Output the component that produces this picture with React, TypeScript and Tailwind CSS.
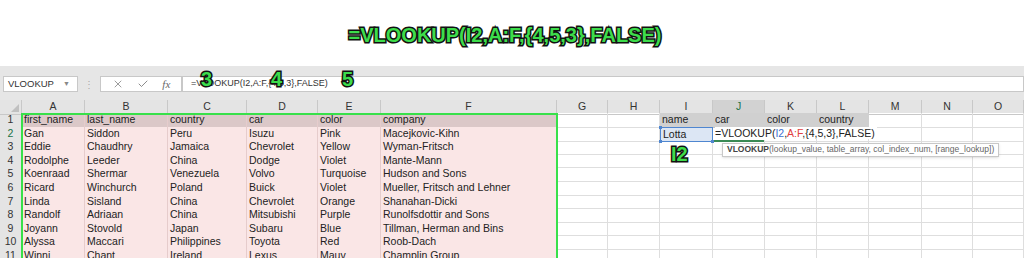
import { X, Check } from 'lucide-react';

const COLS = ['A', 'B', 'C', 'D', 'E', 'F', 'G', 'H', 'I', 'J', 'K', 'L', 'M', 'N', 'O'];

const data: string[][] = [
  ['first_name', 'last_name', 'country', 'car', 'color', 'company'],
  ['Gan', 'Siddon', 'Peru', 'Isuzu', 'Pink', 'Macejkovic-Kihn'],
  ['Eddie', 'Chaudhry', 'Jamaica', 'Chevrolet', 'Yellow', 'Wyman-Fritsch'],
  ['Rodolphe', 'Leeder', 'China', 'Dodge', 'Violet', 'Mante-Mann'],
  ['Koenraad', 'Shermar', 'Venezuela', 'Volvo', 'Turquoise', 'Hudson and Sons'],
  ['Ricard', 'Winchurch', 'Poland', 'Buick', 'Violet', 'Mueller, Fritsch and Lehner'],
  ['Linda', 'Sisland', 'China', 'Chevrolet', 'Orange', 'Shanahan-Dicki'],
  ['Randolf', 'Adriaan', 'China', 'Mitsubishi', 'Purple', 'Runolfsdottir and Sons'],
  ['Joyann', 'Stovold', 'Japan', 'Subaru', 'Blue', 'Tillman, Herman and Bins'],
  ['Alyssa', 'Maccari', 'Philippines', 'Toyota', 'Red', 'Roob-Dach'],
  ['Winni', 'Chant', 'Ireland', 'Lexus', 'Mauv', 'Champlin Group'],
];

const lookupHead = ['name', 'car', 'color', 'country'];

const gridCols =
  'grid grid-cols-[22px_63px_83px_79px_71px_63px_176px_51px_52px_53px_52px_52px_52px_53px_51px_51px]';

const outline = '[-webkit-text-stroke:3px_#111] [paint-order:stroke_fill] text-[#3ddc4b] font-bold';

function Cell({ row, col }: { row: number; col: number }) {
  // col 0..14 -> A..O
  if (col < 6) {
    const bg = row === 1 ? 'bg-[#dbc8c8]' : 'bg-[#fae6e6]';
    return (
      <div className={`${bg} border-r border-b border-[#e6cccc] pl-[2px] overflow-hidden whitespace-nowrap`}>
        {data[row - 1][col]}
      </div>
    );
  }
  if (row === 1 && col >= 8 && col <= 11) {
    return (
      <div className="bg-[#d0d0d0] border-b border-[#c4c4c4] pl-[2px] whitespace-nowrap">{lookupHead[col - 8]}</div>
    );
  }
  if (row === 2 && col === 8) {
    return (
      <div className="bg-[#dce6f4] border border-[#4f86d0] pl-[2px] relative">
        Lotta
        <span className="absolute -left-[2px] -top-[2px] w-[3px] h-[3px] bg-[#4f86d0]" />
        <span className="absolute -right-[2px] -bottom-[2px] w-[3px] h-[3px] bg-[#4f86d0]" />
        <span className="absolute -left-[2px] -bottom-[2px] w-[3px] h-[3px] bg-[#4f86d0]" />
      </div>
    );
  }
  if (row === 2 && col === 9) {
    return (
      <div className="border-b-2 border-[#3a8a55] pl-[2px] whitespace-nowrap overflow-visible">
        <span className="relative z-10 bg-white pr-[2px] text-[#222]">
          =VLOOKUP(<span className="text-[#3d6fd0]">I2</span>,<span className="text-[#e04040]">A:F</span>
          ,{'{'}4,5,3{'}'},FALSE)
        </span>
      </div>
    );
  }
  return <div className="border-r border-b border-[#dedede]" />;
}

export default function App() {
  return (
    <div className="w-[1024px] h-[258px] overflow-hidden bg-white flex flex-col font-['Liberation_Sans',Arial,sans-serif] text-[#222]">
      {/* Title */}
      <div className="h-[66px] shrink-0 flex items-center justify-center pr-[14px] pt-[4px]">
        <h1 className={`text-[20px] ${outline}`}>=VLOOKUP(I2,A:F,{'{'}4,5,3{'}'},FALSE)</h1>
      </div>

      {/* Formula bar */}
      <div className="h-[34px] shrink-0 bg-[#e6e6e6] flex items-start pt-[10px] pl-[3px] relative">
        <div className="w-[75px] h-[16px] bg-white border border-[#c8c8c8] flex items-center justify-between px-[4px] text-[9.5px] text-[#333]">
          <span>VLOOKUP</span>
          <span className="text-[7px] text-[#888] pr-[3px]">▼</span>
        </div>
        <div className="w-[22px] h-[16px] flex items-center justify-center text-[#aaa] text-[10px]">⋮</div>
        <div className="w-[82px] h-[16px] bg-white border border-[#c8c8c8] flex items-center justify-around px-[4px] text-[#666]">
          <X size={12} strokeWidth={1.3} />
          <Check size={12} strokeWidth={1.5} />
          <span className="font-['Liberation_Serif',serif] italic text-[11px]">fx</span>
        </div>
        <div className="flex-1 h-[16px] bg-white border border-[#c8c8c8] flex items-center pl-[8px] text-[9px] text-[#333]">
          =VLOOKUP(I2,A:F,{'{'}4,5,3{'}'},FALSE)
        </div>
        <span className={`absolute left-[201px] -top-[2px] text-[20px] ${outline}`}>3</span>
        <span className={`absolute left-[271px] -top-[2px] text-[20px] ${outline}`}>4</span>
        <span className={`absolute left-[342px] -top-[2px] text-[20px] ${outline}`}>5</span>
      </div>

      {/* Grid */}
      <div className="relative flex-1 text-[10.5px] leading-[13.6px]">
        <div className={`${gridCols} h-[13px] bg-[#e4e4e4] text-[#333] leading-[13px]`}>
          <div className="border-r border-b border-[#c8c8c8] relative">
            <span className="absolute right-[2px] bottom-[2px] w-0 h-0 border-l-[8px] border-l-transparent border-b-[8px] border-b-[#c0c0c0]" />
          </div>
          {COLS.map((c) => (
            <div
              key={c}
              className={
                c === 'J'
                  ? 'text-center bg-[#d2d2d2] border-r border-[#c8c8c8] border-b-2 border-b-[#3a8a55] text-[#217346]'
                  : 'text-center border-r border-b border-[#c8c8c8]'
              }
            >
              {c}
            </div>
          ))}
        </div>
        {data.map((_, i) => {
          const row = i + 1;
          return (
            <div key={row} className={`${gridCols} h-[13.6px]`}>
              <div
                className={`bg-[#e4e4e4] border-r border-b border-[#c8c8c8] text-center ${
                  row === 2 ? 'text-[#217346]' : 'text-[#333]'
                }`}
              >
                {row}
              </div>
              {COLS.map((c, ci) => (
                <Cell key={c} row={row} col={ci} />
              ))}
            </div>
          );
        })}

        {/* data range outline */}
        <div className="absolute left-[21px] top-[13px] w-[537px] h-[200px] border-2 border-[#38e04a] pointer-events-none" />

        {/* I2 label */}
        <span className={`absolute left-[671px] top-[48px] text-[20px] ${outline}`}>I2</span>

        {/* function tooltip */}
        <div className="absolute left-[722px] top-[43px] h-[14px] bg-white border border-[#c8c8c8] shadow-sm px-[4px] flex items-center text-[8.5px] text-[#666] whitespace-nowrap z-20">
          <span className="font-bold text-[#444]">VLOOKUP</span>(lookup_value, table_array, col_index_num, [range_lookup])
        </div>
      </div>
    </div>
  );
}
